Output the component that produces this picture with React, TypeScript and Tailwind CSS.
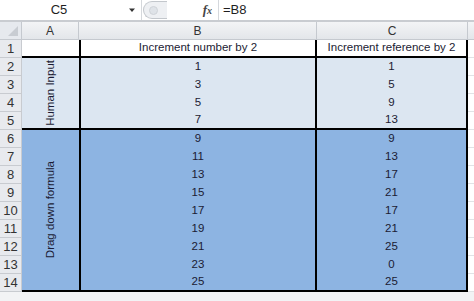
import React from 'react';

const font = { fontFamily: '"Liberation Sans", Arial, sans-serif' };

const rowsB = [1, 3, 5, 7, 9, 11, 13, 15, 17, 19, 21, 23, 25];
const rowsC = [1, 5, 9, 13, 9, 13, 17, 21, 17, 21, 25, 0, 25];

function FormulaBar() {
  return (
    <div className="flex h-[22px] bg-white border-b-2 border-[#c9ccd1] text-[13px] text-[#1e1e1e]">
      <div className="flex items-center w-[142px] border-r border-[#d5d8dc]">
        <span className="flex-1 text-center pr-[10px]">C5</span>
        <svg width="8" height="6" viewBox="0 0 8 6" className="mr-[5px]">
          <path d="M1 1.5 L7 1.5 L4 5 Z" fill="#333" />
        </svg>
      </div>
      <div className="flex items-center w-[76px] h-full pl-[1px] pr-[6px]">
        <div className="flex items-center h-[18px] w-[24px] rounded-l-full border border-r-0 border-[#c3c7cc] bg-[#eef0f3]">
          <div className="ml-[5px] w-[9px] h-[9px] rounded-full bg-[#dfe3e8] border border-[#cfd3d8]" />
        </div>
        <div className="flex-1" />
        <span className="italic font-bold text-[13px] text-[#444]" style={{ fontFamily: '"Liberation Serif", serif' }}>
          f<span className="text-[10px]">x</span>
        </span>
      </div>
      <div className="flex items-center flex-1 border-l border-[#d5d8dc] pl-[4px]">=B8</div>
    </div>
  );
}

export default function App() {
  return (
    <div className="w-[474px] h-[301px] overflow-hidden bg-[#f2f3f5]" style={font}>
      <FormulaBar />
      <div className="grid grid-cols-[22px_57px_238px_151px_1fr] grid-rows-[18px_repeat(14,18px)] text-[11.5px] text-[#1b1b33]">
        {/* header row */}
        <div className="relative bg-[#e6e9ee] border-r border-b border-[#c5c9cf]">
          <svg width="10" height="10" viewBox="0 0 10 10" className="absolute right-[3px] bottom-[3px]">
            <path d="M10 0 L10 10 L0 10 Z" fill="#c8ccd2" />
          </svg>
        </div>
        {['A', 'B', 'C'].map((c) => (
          <div key={c} className="flex items-center justify-center bg-gradient-to-b from-[#f3f4f6] to-[#e3e6ea] border-r border-b border-[#c5c9cf] text-[#333] text-[12px]">
            {c}
          </div>
        ))}
        <div className="bg-gradient-to-b from-[#f3f4f6] to-[#e3e6ea] border-b border-[#c5c9cf]" />

        {/* row numbers column */}
        {Array.from({ length: 14 }, (_, i) => (
          <div
            key={'r' + i}
            className="flex items-center justify-center bg-[#e8eaee] border-r border-b border-[#c8cbd0] text-[#333] text-[13px]"
            style={{ gridColumn: 1, gridRow: i + 2 }}
          >
            {i + 1}
          </div>
        ))}

        {/* row 1 */}
        <div className="bg-white border-b-2 border-black" style={{ gridColumn: 2, gridRow: 2 }} />
        <div className="flex items-center justify-center bg-white border-x-2 border-b-2 border-black" style={{ gridColumn: 3, gridRow: 2 }}>
          Increment number by 2
        </div>
        <div className="flex items-center justify-center bg-white border-r-2 border-b-2 border-black" style={{ gridColumn: 4, gridRow: 2 }}>
          Increment reference by 2
        </div>

        {/* merged labels */}
        <div className="flex items-center justify-center bg-[#dce6f1] border-b-2 border-black" style={{ gridColumn: 2, gridRow: '3 / 7' }}>
          <span className="[writing-mode:vertical-rl] rotate-180">Human Input</span>
        </div>
        <div className="flex items-center justify-center bg-[#8db4e2] border-b-2 border-black" style={{ gridColumn: 2, gridRow: '7 / 16' }}>
          <span className="[writing-mode:vertical-rl] rotate-180">Drag down formula</span>
        </div>

        {/* values */}
        {rowsB.map((b, i) => {
          const light = i < 4;
          const thick = i === 3 || i === 12;
          const bg = light ? 'bg-[#dce6f1]' : 'bg-[#8db4e2]';
          return (
            <React.Fragment key={'v' + i}>
              <div
                className={`flex items-center justify-center ${bg} border-x-2 border-black ${thick ? 'border-b-2' : ''}`}
                style={{ gridColumn: 3, gridRow: i + 3 }}
              >
                {b}
              </div>
              <div
                className={`flex items-center justify-center ${bg} border-r-2 border-black ${thick ? 'border-b-2' : ''}`}
                style={{ gridColumn: 4, gridRow: i + 3 }}
              >
                {rowsC[i]}
              </div>
            </React.Fragment>
          );
        })}

        {/* column D strip */}
        {Array.from({ length: 14 }, (_, i) => (
          <div key={'d' + i} className="bg-white border-b border-[#e1e3e6]" style={{ gridColumn: 5, gridRow: i + 2 }} />
        ))}
      </div>
    </div>
  );
}
